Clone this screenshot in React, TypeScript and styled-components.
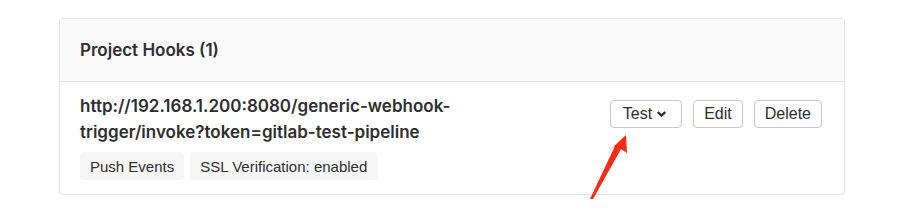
import React from "react";
import styled, { createGlobalStyle } from "styled-components";

const Global = createGlobalStyle`
  html, body { margin: 0; padding: 0; background: #ffffff; }
  body { font-family: Inter, "Liberation Sans", Arial, sans-serif; color: #2e2e2e; }
`;

const Page = styled.div`
  position: relative;
  width: 909px;
  height: 214px;
  padding: 18px 0 0 59px;
  box-sizing: border-box;
`;

const Card = styled.section`
  width: 786px;
  border: 1px solid #e3e3e3;
  border-radius: 4px;
  box-sizing: border-box;
  overflow: hidden;
`;

const CardHeader = styled.header`
  height: 62px;
  display: flex;
  align-items: center;
  padding: 0 20px;
  background: #fafafa;
  border-bottom: 1px solid #e3e3e3;
  font-size: 17px;
  font-weight: 600;
  color: #2e2e2e;
`;

const HookRow = styled.div`
  display: flex;
  align-items: flex-start;
  justify-content: space-between;
  padding: 11px 22px 14px 20px;
`;

const HookInfo = styled.div`
  width: 480px;
  display: flex;
  flex-direction: column;
`;

const HookUrl = styled.div`
  font-size: 17px;
  font-weight: 600;
  line-height: 26px;
  color: #2e2e2e;
`;

const Badges = styled.div`
  display: flex;
  gap: 6px;
  margin-top: 7px;
`;

const Badge = styled.span`
  display: inline-flex;
  align-items: center;
  height: 28px;
  padding: 0 10px;
  background: #f6f6f6;
  border-radius: 4px;
  font-family: "Liberation Sans", Arial, sans-serif;
  font-size: 15px;
  color: #2e2e2e;
`;

const Actions = styled.div`
  display: flex;
  gap: 11px;
  margin-top: 7px;
`;

const Button = styled.button<{ $dropdown?: boolean }>`
  display: inline-flex;
  align-items: center;
  gap: 4px;
  height: 28px;
  padding: ${(p) => (p.$dropdown ? "0 14px 0 12px" : "0 10px")};
  background: #ffffff;
  border: 1px solid #c8c8c8;
  border-radius: 4px;
  font-family: "Liberation Sans", Arial, sans-serif;
  font-size: 16px;
  color: #2e2e2e;
`;

const Arrow = styled.svg`
  position: absolute;
  left: 0;
  top: 0;
  pointer-events: none;
`;

export default function App() {
  return (
    <>
      <Global />
      <Page>
        <Card>
          <CardHeader>Project Hooks (1)</CardHeader>
          <HookRow>
            <HookInfo>
              <HookUrl>
                http://192.168.1.200:8080/generic-webhook-trigger/invoke?token=gitlab-test-pipeline
              </HookUrl>
              <Badges>
                <Badge>Push Events</Badge>
                <Badge>SSL Verification: enabled</Badge>
              </Badges>
            </HookInfo>
            <Actions>
              <Button $dropdown>
                Test
                <svg width="11" height="8" viewBox="0 0 11 8">
                  <polyline points="1.8,2 5.5,5.6 9.2,2" fill="none" stroke="#2e2e2e" strokeWidth="2.4" />
                </svg>
              </Button>
              <Button>Edit</Button>
              <Button>Delete</Button>
            </Actions>
          </HookRow>
        </Card>
        <Arrow width="909" height="214" viewBox="0 0 909 214">
          <polygon
            points="626,135 627,153 621,149 593,199 590,199 615,146 610,150"
            fill="#ff2a12"
          />
        </Arrow>
      </Page>
    </>
  );
}
